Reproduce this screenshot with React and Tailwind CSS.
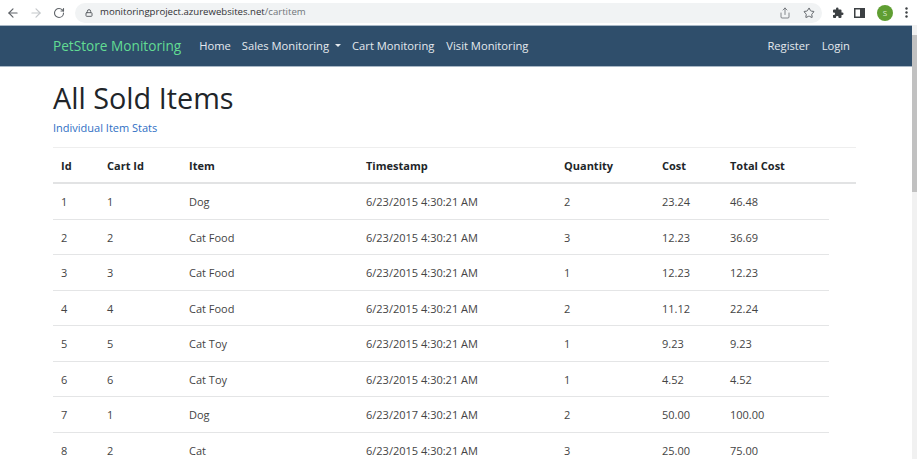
import React from "react";
import { ArrowLeft, ArrowRight, RotateCw, Lock, Star, Share } from "lucide-react";

const cols = "grid grid-cols-[46px_82px_177px_198px_98px_68px_107px] items-center";
const rows = [
  ["1", "1", "Dog", "6/23/2015 4:30:21 AM", "2", "23.24", "46.48"],
  ["2", "2", "Cat Food", "6/23/2015 4:30:21 AM", "3", "12.23", "36.69"],
  ["3", "3", "Cat Food", "6/23/2015 4:30:21 AM", "1", "12.23", "12.23"],
  ["4", "4", "Cat Food", "6/23/2015 4:30:21 AM", "2", "11.12", "22.24"],
  ["5", "5", "Cat Toy", "6/23/2015 4:30:21 AM", "1", "9.23", "9.23"],
  ["6", "6", "Cat Toy", "6/23/2015 4:30:21 AM", "1", "4.52", "4.52"],
  ["7", "1", "Dog", "6/23/2017 4:30:21 AM", "2", "50.00", "100.00"],
  ["8", "2", "Cat", "6/23/2015 4:30:21 AM", "3", "25.00", "75.00"],
];
const heads = ["Id", "Cart Id", "Item", "Timestamp", "Quantity", "Cost", "Total Cost"];

export default function App() {
  return (
    <div className="relative h-[459px] w-[917px] overflow-hidden bg-white font-['Open_Sans','Noto_Sans',sans-serif] text-[11px] text-[#444444]">
      {/* Browser chrome */}
      <div className="flex h-[25px] items-center bg-white">
        <div className="flex w-[75px] shrink-0 items-center pl-[6px] text-[#5f6368]">
          <ArrowLeft size={14} strokeWidth={2} />
          <ArrowRight size={14} strokeWidth={2} className="ml-[9px] text-[#c4c7ca]" />
          <RotateCw size={12} strokeWidth={2.2} className="ml-[10px]" />
        </div>
        <div className="flex h-[20px] w-[747px] shrink-0 items-center rounded-full bg-[#f1f3f4] pl-[10px] pr-[7px]">
          <Lock size={8} strokeWidth={3} className="text-[#5f6368]" />
          <span className="ml-[7px] text-[9.600px] text-[#303134]">
            monitoringproject.azurewebsites.net<span className="text-[#70757a]">/cartitem</span>
          </span>
          <Share size={12} strokeWidth={1.5} className="ml-auto text-[#5f6368]" />
          <Star size={12} strokeWidth={2} className="ml-[12px] text-[#5f6368]" />
        </div>
        <div className="ml-[10px] flex items-center text-[#3c4043]">
          <svg width="12" height="12" viewBox="0 0 24 24" fill="currentColor" aria-hidden="true">
            <path d="M20.5 11H19V7a2 2 0 0 0-2-2h-4V3.5a2.5 2.5 0 0 0-5 0V5H4a2 2 0 0 0-2 2v3.800h1.500a2.700 2.700 0 0 1 0 5.400H2V20a2 2 0 0 0 2 2h3.800v-1.500a2.700 2.700 0 0 1 5.400 0V22H17a2 2 0 0 0 2-2v-4h1.500a2.500 2.500 0 0 0 0-5z" />
          </svg>
          <svg className="ml-[10px]" width="11" height="10" viewBox="0 0 11 10" aria-hidden="true">
            <rect x="0.750" y="0.750" width="9.500" height="8.500" fill="none" stroke="currentColor" strokeWidth="1.500" />
            <rect x="6" y="1" width="4" height="8" fill="currentColor" />
          </svg>
          <div className="ml-[12px] flex h-[16px] w-[16px] items-center justify-center rounded-full bg-[#5f9e32] text-[8px] text-[#dcebd0]">S</div>
          <svg className="ml-[12px]" width="3" height="11" viewBox="0 0 3 11" fill="currentColor" aria-hidden="true">
            <circle cx="1.500" cy="1.500" r="1.200" />
            <circle cx="1.500" cy="5.500" r="1.200" />
            <circle cx="1.500" cy="9.500" r="1.200" />
          </svg>
        </div>
      </div>

      {/* Navbar */}
      <nav className="flex h-[42px] w-[912px] items-center border-y border-[#a9b8c6] bg-[#2f4e6b] pl-[53px] pr-[62px] text-[11.200px] text-[#e4e9ee]">
        <span className="text-[13.650px] text-[#62dc93]">PetStore Monitoring</span>
        <span className="ml-[18px]">Home</span>
        <span className="ml-[11px] flex items-center">
          Sales Monitoring
          <span className="ml-[6px] h-0 w-0 border-x-[3.500px] border-t-[3.500px] border-x-transparent border-t-[#e4e9ee]" />
        </span>
        <span className="ml-[11px]">Cart Monitoring</span>
        <span className="ml-[12px]">Visit Monitoring</span>
        <span className="ml-auto">Register</span>
        <span className="ml-[12px]">Login</span>
      </nav>

      {/* Content */}
      <main className="ml-[53px] w-[803px]">
        <h1 className="mt-[11px] h-[40px] text-[28.800px] font-medium leading-[40px] text-[#212529]">All Sold Items</h1>
        <a className="mt-[2px] block h-[16px] leading-[16px] text-[#2f6fc4]">Individual Item Stats</a>
        <div className="mt-[11px] border-t border-[#eeeeee]">
          <div className={`${cols} h-[36px] border-b-2 border-[#e2e3e4] font-bold text-[#212529]`}>
            {heads.map((h) => (
              <div key={h} className="pl-[8px] pt-[2px]">{h}</div>
            ))}
          </div>
          <div className="w-[776px]">
            {rows.map((r) => (
              <div key={r[0]} className={`${cols} h-[35.500px] border-b border-[#e4e5e6]`}>
                {r.map((c, i) => (
                  <div key={i} className="pl-[8px] pt-[2px]">{c}</div>
                ))}
              </div>
            ))}
          </div>
        </div>
      </main>

      {/* Scrollbar */}
      <div className="absolute right-0 top-[25px] h-[434px] w-[5px] bg-[#f1f1f1]">
        <div className="mt-[10px] h-[157px] w-full bg-[#c1c1c1]" />
      </div>
    </div>
  );
}
